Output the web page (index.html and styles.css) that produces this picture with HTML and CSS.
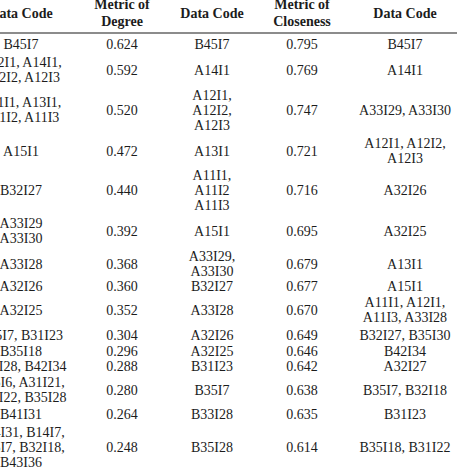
FILE: index.html
```html
<!DOCTYPE html>
<html lang="en">
<head>
<meta charset="utf-8">
<title>Data Code table</title>
<link rel="stylesheet" href="styles.css">
</head>
<body>
<table class="metrics">
  <colgroup>
    <col class="c1"><col class="c2"><col class="c3"><col class="c4"><col class="c5">
  </colgroup>
  <thead>
    <tr>
      <th>Data Code</th>
      <th>Metric of<br>Degree</th>
      <th>Data Code</th>
      <th>Metric of<br>Closeness</th>
      <th>Data Code</th>
    </tr>
  </thead>
  <tbody>
    <tr class="h22"><td>B45I7</td><td>0.624</td><td>B45I7</td><td>0.795</td><td>B45I7</td></tr>
    <tr class="h30"><td>A12I1, A14I1,<br>A12I2, A12I3</td><td>0.592</td><td>A14I1</td><td>0.769</td><td>A14I1</td></tr>
    <tr class="h50"><td>A11I1, A13I1,<br>A11I2, A11I3</td><td>0.520</td><td>A12I1,<br>A12I2,<br>A12I3</td><td>0.747</td><td>A33I29, A33I30</td></tr>
    <tr class="h32"><td>A15I1</td><td>0.472</td><td>A13I1</td><td>0.721</td><td>A12I1, A12I2,<br>A12I3</td></tr>
    <tr class="h46"><td>B32I27</td><td>0.440</td><td>A11I1,<br>A11I2<br>A11I3</td><td>0.716</td><td>A32I26</td></tr>
    <tr class="h36"><td>A33I29<br>A33I30</td><td>0.392</td><td>A15I1</td><td>0.695</td><td>A32I25</td></tr>
    <tr class="h30"><td>A33I28</td><td>0.368</td><td>A33I29,<br>A33I30</td><td>0.679</td><td>A13I1</td></tr>
    <tr class="h15"><td>A32I26</td><td>0.360</td><td>B32I27</td><td>0.677</td><td>A15I1</td></tr>
    <tr class="h32"><td>A32I25</td><td>0.352</td><td>A33I28</td><td>0.670</td><td>A11I1, A12I1,<br>A11I3, A33I28</td></tr>
    <tr class="h18"><td>B35I7, B31I23</td><td>0.304</td><td>A32I26</td><td>0.649</td><td>B32I27, B35I30</td></tr>
    <tr class="h15"><td>B35I18</td><td>0.296</td><td>A32I25</td><td>0.646</td><td>B42I34</td></tr>
    <tr class="h15"><td>B33I28, B42I34</td><td>0.288</td><td>B31I23</td><td>0.642</td><td>A32I27</td></tr>
    <tr class="h32"><td>B35I6, A31I21,<br>B31I22, B35I28</td><td>0.280</td><td>B35I7</td><td>0.638</td><td>B35I7, B32I18</td></tr>
    <tr class="h16"><td>B41I31</td><td>0.264</td><td>B33I28</td><td>0.635</td><td>B31I23</td></tr>
    <tr class="h50"><td>B34I31, B14I7,<br>B35I7, B32I18,<br>B43I36</td><td>0.248</td><td>B35I28</td><td>0.614</td><td>B35I18, B31I22</td></tr>
  </tbody>
</table>
</body>
</html>
```
FILE: styles.css
```css
html, body {
  margin: 0;
  padding: 0;
  background: #ffffff;
  overflow: hidden;
}

body {
  width: 474px;
  height: 474px;
  font-family: "Liberation Serif", "Times New Roman", serif;
  font-size: 14px;
  color: #1c1c1c;
}

.metrics {
  table-layout: fixed;
  width: 486px;
  border-collapse: collapse;
  border-spacing: 0;
  margin: -4px 0 0 -29px;
}

.c1 { width: 100px; }
.c2 { width: 102px; }
.c3 { width: 78px; }
.c4 { width: 102px; }
.c5 { width: 104px; }

.metrics th {
  font-weight: bold;
  line-height: 17px;
  padding: 0 0 2px;
  text-align: center;
  vertical-align: middle;
  white-space: nowrap;
  border-bottom: 2px solid #8c8c8c;
}

.metrics td {
  padding: 0;
  line-height: 15px;
  text-align: center;
  vertical-align: middle;
  white-space: nowrap;
}

.h15 { height: 15px; }
.h16 { height: 16px; }
.h18 { height: 18px; }
.h22 { height: 22px; }
.h30 { height: 30px; }
.h32 { height: 32px; }
.h36 { height: 36px; }
.h46 { height: 46px; }
.h50 { height: 50px; }
```
